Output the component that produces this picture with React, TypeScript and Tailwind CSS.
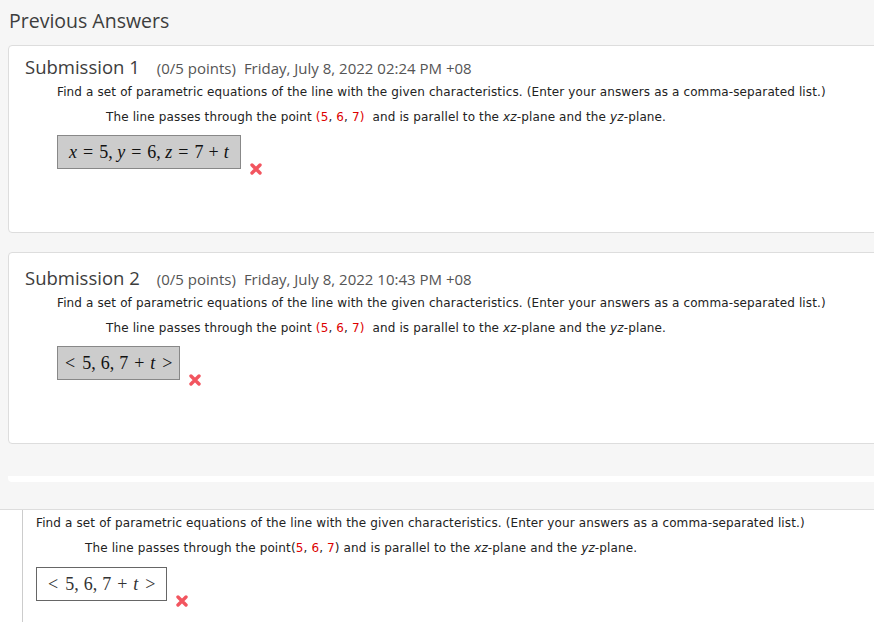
import React from 'react';

const serif = { fontFamily: '"Liberation Serif", "Times New Roman", serif' };
const openSans = { fontFamily: '"Open Sans", sans-serif' };

function WrongMark() {
  return (
    <svg width="12" height="12" viewBox="0 0 12 12" className="shrink-0">
      <path d="M2 2 L10 10 M10 2 L2 10" stroke="#f2555f" strokeWidth="3.4" strokeLinecap="round" />
    </svg>
  );
}

function Point({ parensRed }: { parensRed: boolean }) {
  const p = parensRed ? 'text-[#dd0000]' : '';
  return (
    <>
      <span className={p}>(</span>
      <span className="text-[#dd0000]">5</span>, <span className="text-[#dd0000]">6</span>,{' '}
      <span className="text-[#dd0000]">7</span>
      <span className={p}>)</span>
    </>
  );
}

function Question({ indentSecond, spaceAfterPoint }: { indentSecond: string; spaceAfterPoint: boolean }) {
  return (
    <div className="text-[12px] text-[#222] tracking-[0.13px]" style={{ fontFamily: '"DejaVu Sans", sans-serif' }}>
      <div className="leading-[25px] whitespace-nowrap">
        Find a set of parametric equations of the line with the given characteristics. (Enter your answers as a comma-separated list.)
      </div>
      <div className={`${indentSecond} leading-[25px] whitespace-nowrap`}>
        The line passes through the point{spaceAfterPoint ? ' ' : ''}
        <Point parensRed={spaceAfterPoint} />
        {spaceAfterPoint ? '\u00a0 ' : ' '}and is parallel to the <i>xz</i>-plane and the <i>yz</i>-plane.
      </div>
    </div>
  );
}

function Rel({ children }: { children: React.ReactNode }) {
  return <span className="mx-[6px]">{children}</span>;
}

function Eq1() {
  return (
    <span className="whitespace-nowrap">
      <i>x</i>
      <Rel>=</Rel>5, <i>y</i>
      <Rel>=</Rel>6, <i>z</i>
      <Rel>=</Rel>7<span className="mx-[5px]">+</span>
      <i>t</i>
    </span>
  );
}

function Eq2() {
  return (
    <span className="whitespace-nowrap">
      <span className="mr-[7px]">&lt;</span>5,<span className="ml-[5px]">6,</span>
      <span className="ml-[5px]">7</span>
      <span className="mx-[6px]">+</span>
      <i>t</i>
      <span className="ml-[7px]">&gt;</span>
    </span>
  );
}

function SubmissionCard({ num, date, eq, topPad, boxPad }: { num: number; date: string; eq: React.ReactNode; topPad: string; boxPad: string }) {
  return (
    <div className={`ml-2 w-[880px] bg-white border border-[#dddddd] rounded-[4px] pl-4 ${topPad} pb-[57px]`}>
      <div className="flex items-baseline h-[24px]" style={openSans}>
        <span className="text-[18.5px] font-medium text-[#3d3d3d]">Submission {num}</span>
        <span className="ml-[17px] text-[15px] text-[#555]">(0/5 points)</span>
        <span className="ml-[8px] text-[15px] text-[#555]">{date}</span>
      </div>
      <div className="pl-[32px] mt-[3px]">
        <Question indentSecond="pl-[49px]" spaceAfterPoint={true} />
      </div>
      <div className="flex items-start pl-[32px] mt-[5px]">
        <div className={`h-[34px] flex items-center ${boxPad} bg-[#cccccc] border border-[#888] text-[18px] text-[#111]`} style={serif}>
          {eq}
        </div>
        <div className="ml-[9px] mt-[28px]">
          <WrongMark />
        </div>
      </div>
    </div>
  );
}

export default function App() {
  return (
    <div className="w-[874px] h-[622px] overflow-hidden bg-[#f6f6f6]">
      <div className="h-[45px] pl-[9px] pt-[7px] text-[19.5px] font-medium text-[#3d3d3d] leading-[28px]" style={openSans}>
        Previous Answers
      </div>
      <SubmissionCard num={1} date="Friday, July 8, 2022 02:24 PM +08" eq={<Eq1 />} topPad="pt-[7px]" boxPad="px-[11px]" />
      <div className="h-[19px]" />
      <SubmissionCard num={2} date="Friday, July 8, 2022 10:43 PM +08" eq={<Eq2 />} topPad="pt-[11px]" boxPad="px-[7px]" />
      <div className="h-[32px]" />
      <div className="ml-2 w-[880px] h-[6px] bg-white rounded-b-[4px]" />
      <div className="h-[27px]" />
      <div className="flex bg-white border-t border-[#dddddd] h-[200px]">
        <div className="w-[22px] shrink-0" />
        <div className="border-l border-[#cccccc] pl-[13px] pt-[1px]">
          <Question indentSecond="pl-[49px]" spaceAfterPoint={false} />
          <div className="flex items-start mt-[6px]">
            <div className="h-[34px] flex items-center px-[11px] bg-white border border-[#666] text-[18px] text-[#333]" style={serif}>
              <Eq2 />
            </div>
            <div className="ml-[9px] mt-[28px]">
              <WrongMark />
            </div>
          </div>
        </div>
      </div>
    </div>
  );
}
